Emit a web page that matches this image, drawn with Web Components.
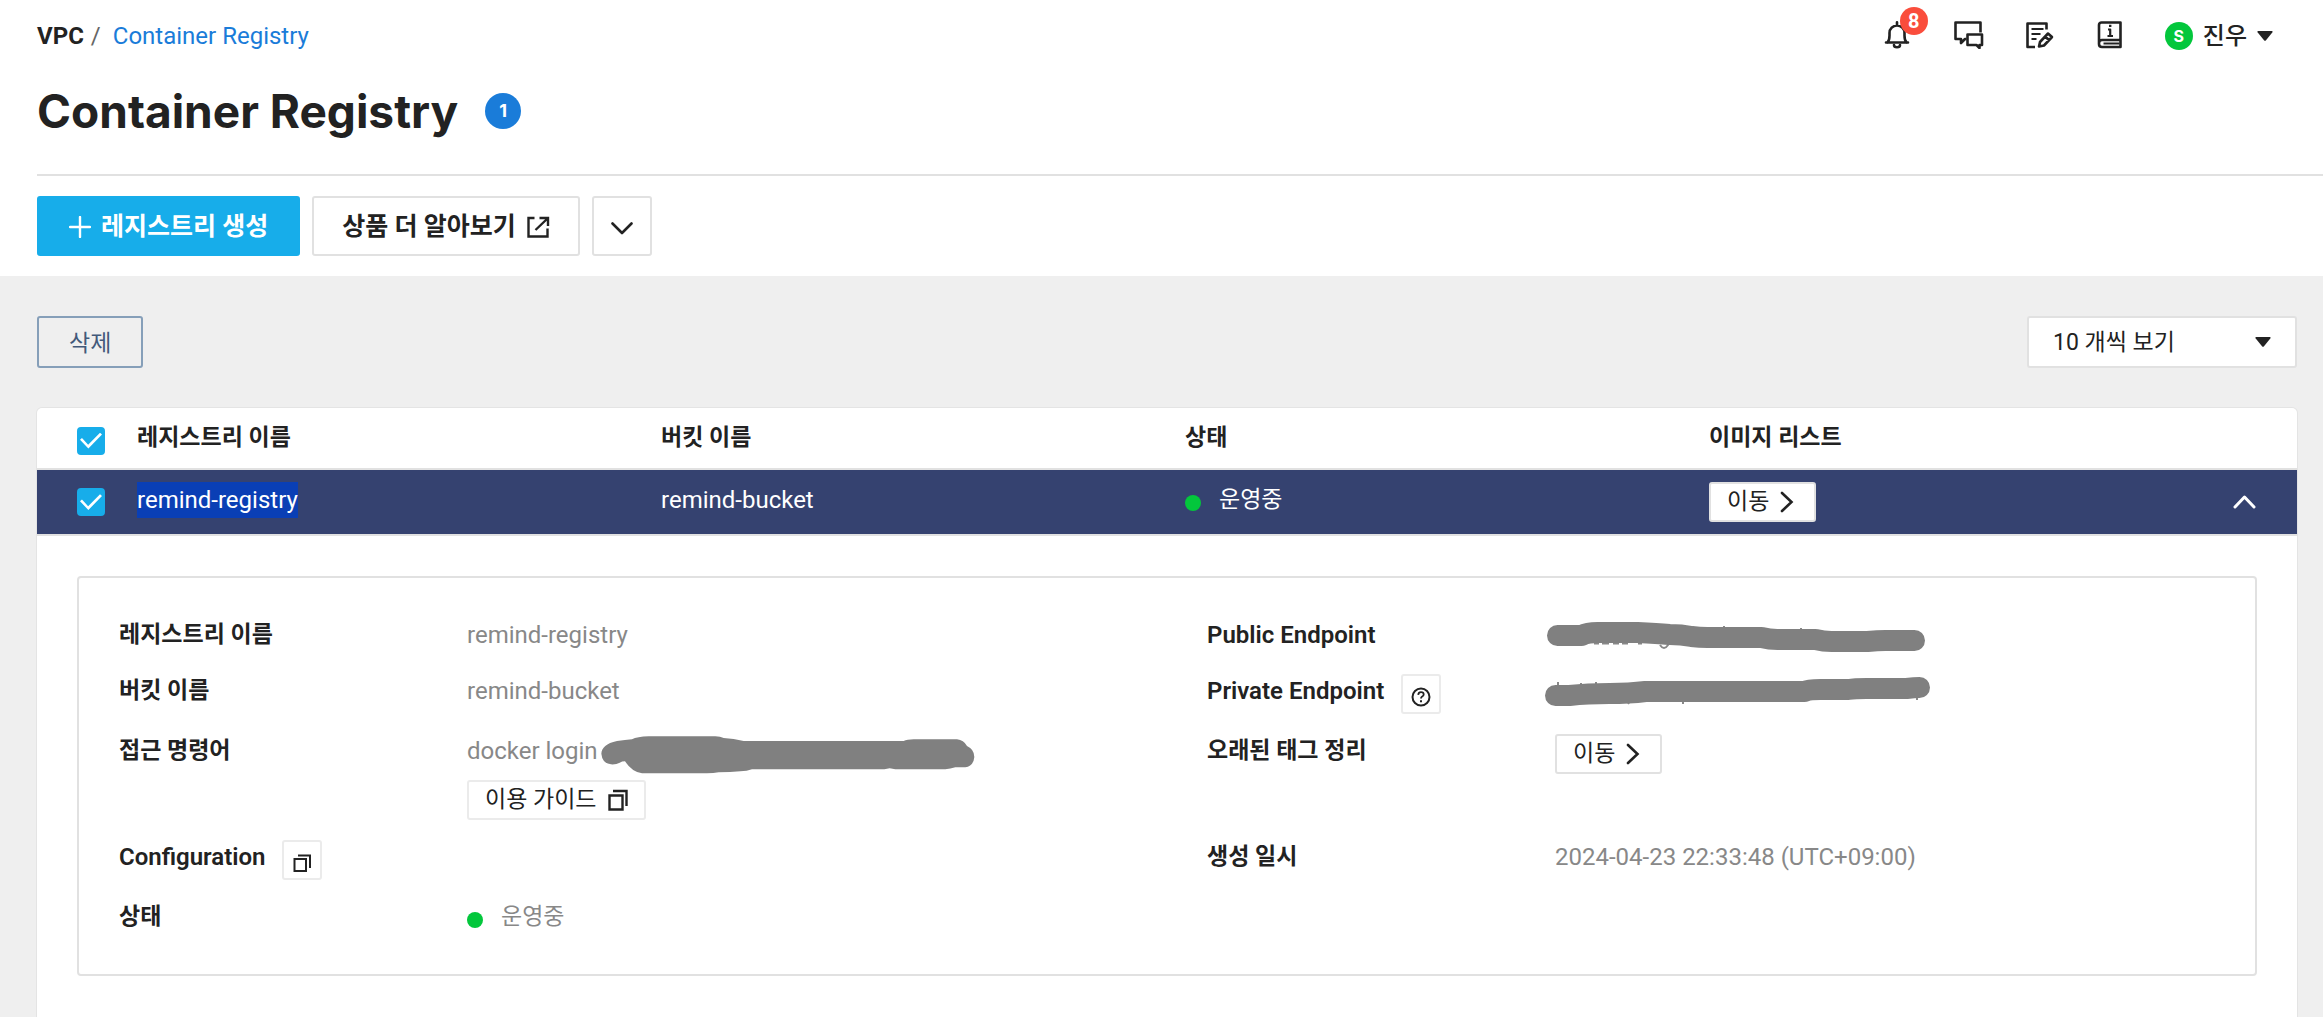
<!DOCTYPE html>
<html lang="ko">
<head>
<meta charset="utf-8">
<title>Container Registry</title>
<style>
  :root {
    --ink: #222;
    --muted: #888;
    --line: #e1e1e1;
    --accent: #17adea;
    --link: #1a7cd9;
    --navy: #354270;
    --green: #03c73c;
  }
  body {
    margin: 0;
    background: #efefef;
    color: var(--ink);
    font: 24px/40px Roboto, "Noto Sans CJK KR", sans-serif;
  }
</style>
</head>
<body>
<cr-app></cr-app>

<script>
const BASE = `
  *, *::before, *::after { box-sizing: border-box; }
  button, select, input { font: inherit; color: inherit; margin: 0; }
  button { background: none; border: 0; padding: 0; cursor: pointer; }
  svg { display: block; flex: none; }
`;

function define(name, css, html) {
  const template = document.createElement('template');
  template.innerHTML = `<style>${BASE}${css}</style>${html}`;
  customElements.define(name, class extends HTMLElement {
    constructor() {
      super();
      this.attachShadow({ mode: 'open', delegatesFocus: true })
        .append(template.content.cloneNode(true));
    }
    connectedCallback() {
      const control = this.shadowRoot.querySelector('[data-control]');
      const label = this.getAttribute('label');
      if (control && label) control.setAttribute('aria-label', label);
    }
  });
}

/* Push button: variants primary, action, arrow, outline and square */
define('cr-button', `
  :host { display: inline-flex; font-size: 23px; }
  button {
    display: flex; align-items: center; justify-content: center; gap: 11px;
    height: 40px; padding: 0 16px; line-height: 36px; white-space: nowrap;
    color: var(--ink); background: #fff; border: 2px solid var(--line); border-radius: 3px;
  }
  :host([variant=primary]) { font-size: 25px; font-weight: 700; }
  :host([variant=primary]) button { height: 60px; gap: 10px; padding: 2px 30px 0; color: #fff; background: var(--accent); border-color: var(--accent); }
  :host([variant=action]) { font-size: 25px; font-weight: 600; }
  :host([variant=action]) button { height: 60px; gap: 10px; padding: 2px 28px 0; }
  :host([variant=arrow]) button { height: 60px; width: 60px; padding: 4px 0 0; }
  :host([variant=outline]) button { height: 52px; padding: 3px 30px 0; color: #42597a; background: none; border-color: #869fb9; }
  :host([variant=square]) button { width: 40px; padding: 6px 0 0; }
  :host([soft]) button { border-color: #ebebeb; }
`, `<button type="button" data-control><slot></slot></button>`);

/* Tick box */
define('cr-check', `
  :host { display: flex; }
  input {
    appearance: none; width: 28px; height: 28px; border-radius: 4px;
    border: 2px solid var(--line); background: #fff; display: grid; place-items: center;
  }
  input:checked { background: var(--accent); border-color: var(--accent); }
  input:checked::after {
    content: ""; width: 22px; height: 16px; background: #fff;
    clip-path: polygon(0 45%, 9% 34%, 37% 76%, 91% 2%, 100% 13%, 38% 100%);
  }
`, `<input type="checkbox" data-control checked>`);

/* Running state with its dot */
define('cr-status', `
  :host { display: flex; align-items: center; gap: 18px; font-size: 23px; }
  i { width: 16px; height: 16px; margin-top: 5px; border-radius: 50%; background: var(--green); }
`, `<i></i><span><slot></slot></span>`);

/* Name and value of one property */
define('cr-field', `
  :host { display: grid; grid-template-columns: 348px 1fr; align-items: start; padding-left: 40px; }
  .name { display: flex; align-items: flex-start; font-weight: 600; font-size: 24px; }
  :host([ko]) .name { font-size: 23px; }
  ::slotted([slot=tip]) { margin: 3px 0 1px 17px; }
  .value { display: flex; flex-direction: column; align-items: flex-start; color: var(--muted); }
  ::slotted(cr-button:not([slot])) { margin: 3px 0 1px; }
  ::slotted(.guide) { margin-top: 9px !important; }
`, `<div class="name"><slot name="name"></slot><slot name="tip"></slot></div>
    <div class="value"><slot></slot></div>`);

define('cr-topbar', `
  :host { display: flex; justify-content: space-between; align-items: center; height: 72px; padding: 0 50px 0 37px; }
  nav { display: flex; }
  nav b { font-weight: 700; }
  nav b a { color: inherit; }
  nav i { font-style: normal; color: #666; margin: 0 12px 0 7px; }
  a { color: var(--link); text-decoration: none; }
  .tools { display: flex; align-items: center; gap: 39px; }
  .tools button { display: block; padding-bottom: 4px; }
  .bell { position: relative; }
  .count {
    position: absolute; left: 19px; top: -12px; width: 28px; height: 28px; border-radius: 50%;
    background: #fa4d3c; color: #fff; font: 700 20px/28px Roboto, sans-serif; text-align: center;
  }
  .tools .user { display: flex; align-items: center; gap: 10px; padding: 0; font-size: 24px; font-weight: 500; line-height: 32px; }
  .face { width: 28px; height: 28px; border-radius: 50%; background: var(--green); color: #fff; font: 700 16px/28px Inter, sans-serif; }
`, `
  <nav aria-label="위치"><b><a href="#vpc">VPC</a></b><i>/</i><a href="#registry">Container Registry</a></nav>
  <div class="tools">
    <button type="button" class="bell" aria-label="알림">
      <svg width="32" height="30" viewBox="0 0 32 30" fill="none" stroke="#222" stroke-width="2.6" stroke-linecap="round" stroke-linejoin="round">
        <path d="M5 23.500h22M6.500 23.500c2-2 2-4 2-7v-2.500a7.500 7.500 0 0 1 15 0v2.500c0 3 0 5 2 7M16 3.200v3"/>
        <path d="M13 26a3 2.200 0 0 0 6 0"/>
      </svg>
      <span class="count">8</span>
    </button>
    <button type="button" aria-label="문의">
      <svg width="32" height="30" viewBox="0 0 32 30" fill="none" stroke="#222" stroke-width="2.600" stroke-linejoin="round">
        <path d="M14.500 20h-1.500l-4 4v-4H3.500v-16.500h25v10"/>
        <path d="M15.500 15.500h14.500v10.500h-2.500v3l-3-3h-9z"/>
      </svg>
    </button>
    <button type="button" aria-label="메모">
      <svg width="32" height="30" viewBox="0 0 32 30" fill="none" stroke="#222" stroke-width="2.600" stroke-linejoin="round">
        <path d="M12 28H4.500V4.500h19v6"/>
        <path d="M8.500 10h12M8.500 15h9M8.500 20h5" stroke-width="2"/>
        <path d="M16 27.500l1-4.500 8-8.500 4 3.500-8 8.500z M22 17.500l4 3.500"/>
      </svg>
    </button>
    <button type="button" aria-label="가이드">
      <svg width="32" height="30" viewBox="0 0 32 30" fill="none" stroke="#222" stroke-width="2.600" stroke-linejoin="round">
        <path d="M26.500 21v-17.500H7.500c-1.500 0-2.500 1-2.500 2.500v19c0 2 1 3 3 3h18.500v-7H8c-2 0-3 1.500-3 3"/>
        <path d="M9.500 24.500h16" stroke-width="2"/>
        <path d="M14 10.500h2.200v6.500M13.500 17h5.500M15 6.800h2.400" stroke-width="2.200"/>
      </svg>
    </button>
    <button type="button" class="user">
      <span class="face">S</span><span>진우</span>
      <svg width="16" height="10" viewBox="0 0 16 10"><path d="M1 0h14q1 .5.300 1.500L9 9.300q-1 1-2 0L.700 1.500Q0 .5 1 0z" fill="#222"/></svg>
    </button>
  </div>`);

define('cr-heading', `
  :host { display: block; padding-left: 37px; }
  .row { display: flex; align-items: center; gap: 27px; height: 104px; padding-bottom: 24px; border-bottom: 2px solid var(--line); }
  h1 { margin: 0; font: 700 46px/60px Inter, sans-serif; }
  span { width: 36px; height: 36px; border-radius: 50%; background: var(--link); color: #fff; font: 700 18px/36px Inter, sans-serif; text-align: center; }
  .bar { display: flex; gap: 12px; padding: 20px 0; }
`, `
  <div class="row"><h1>Container Registry</h1><span>1</span></div>
  <div class="bar"><slot></slot></div>`);

define('cr-pagesize', `
  :host { display: grid; width: 270px; font-size: 23px; }
  select, svg { grid-area: 1 / 1; }
  select { appearance: none; width: 100%; height: 52px; padding: 2px 24px 0; background: #fff; border: 2px solid var(--line); border-radius: 3px; }
  svg { justify-self: end; align-self: center; margin-right: 26px; pointer-events: none; }
`, `
  <select data-control><option>10 개씩 보기</option></select>
  <svg width="16" height="10" viewBox="0 0 16 10"><path d="M1 0h14q1 .5.300 1.500L9 9.300q-1 1-2 0L.700 1.500Q0 .5 1 0z" fill="#222"/></svg>`);

define('cr-table', `
  :host { display: block; }
  table { width: 100%; border-collapse: collapse; table-layout: fixed; }
  th, td { padding: 0; text-align: left; vertical-align: middle; font-weight: 400; }
  tr { border-bottom: 2px solid var(--line); }
  thead th { height: 61px; font-size: 23px; font-weight: 600; }
  tbody td { height: 66px; background: var(--navy); color: #fff; line-height: 36px; }
  tbody td.text { padding-bottom: 4px; }
  thead cr-check { padding-top: 5px; }
  cr-check { padding-left: 40px; }
  col.pick { width: 100px; }
  col.more { width: 64px; }
  mark { display: inline-block; background: #0a3fb5; color: #fff; }
  td cr-button, td button { display: flex; }
`, `
  <table>
    <colgroup><col class="pick"><col><col><col><col><col class="more"></colgroup>
    <thead><tr>
      <th><cr-check label="전체 선택"></cr-check></th>
      <th scope="col">레지스트리 이름</th><th scope="col">버킷 이름</th><th scope="col">상태</th><th scope="col">이미지 리스트</th><th></th>
    </tr></thead>
    <tbody><tr>
      <td><cr-check label="remind-registry 선택"></cr-check></td>
      <td class="text"><mark>remind-registry</mark></td>
      <td class="text">remind-bucket</td>
      <td class="text"><cr-status>운영중</cr-status></td>
      <td><cr-button>이동 <svg width="18" height="22" viewBox="0 0 18 22" fill="none" stroke="#222" stroke-width="2.600" stroke-linecap="round"><path d="M2 2l9.500 9L2 20"/></svg></cr-button></td>
      <td><button type="button" aria-label="접기"><svg width="24" height="14" viewBox="0 0 24 14" fill="none" stroke="#fff" stroke-width="3" stroke-linecap="round" stroke-linejoin="round"><path d="M2 12l9.500-10L21 12"/></svg></button></td>
    </tr></tbody>
  </table>`);

define('cr-details', `
  :host { display: block; padding: 40px; }
  section {
    display: grid; grid-template-columns: 1fr 1fr; row-gap: 16px;
    padding: 37px 0; border: 2px solid var(--line); border-radius: 4px;
  }
  .line { display: flex; align-items: center; gap: 3px; height: 40px; }
  .line .login { margin-top: 8px; }
  .pull { margin-left: -10px; }
`, `
  <section>
    <cr-field ko><span slot="name">레지스트리 이름</span>remind-registry</cr-field>
    <cr-field><span slot="name">Public Endpoint</span>
      <div class="line"><svg class="pull" width="382" height="36" viewBox="1545 617 382 36" fill="none" role="img" aria-label="가려진 주소">
        <path d="M1594 643.500h5M1602 643.500h7M1613 643.500h6M1622 643.500h6M1638 643.500h4M1660 645q4 6 8 0v-3M1708 640v8M1724 626v4M1801 628v4" stroke="#888" stroke-width="2"/>
        <path d="M1557.500 635.500h24q6-3 16-3h40q20 1 32 2 12 0 22 2 8 1 16 1h54q8 2 16 2h38q8 2 16 2h36q10-1 18-1h29" stroke="#808080" stroke-width="21" stroke-linecap="round" stroke-linejoin="round"/>
      </svg></div></cr-field>
    <cr-field ko><span slot="name">버킷 이름</span>remind-bucket</cr-field>
    <cr-field><span slot="name">Private Endpoint</span>
      <cr-button slot="tip" variant="square" soft label="도움말"><svg width="20" height="20" viewBox="0 0 20 20" fill="none" stroke="#222"><circle cx="10" cy="10" r="8.500" stroke-width="2"/><path d="M7.200 7.800q.3-2.600 2.800-2.600 2.700 0 2.700 2.300 0 1.200-1.500 2-1.200.7-1.200 2" stroke-width="1.800"/><path d="M10 13.300v1.900" stroke-width="2"/></svg></cr-button>
      <div class="line"><svg class="pull" width="390" height="36" viewBox="1545 673 390 36" fill="none" role="img" aria-label="가려진 주소">
        <path d="M1558 682v6M1581 683v4M1596 682v4M1601 704v-4M1629 704l-2-3M1683 704v-6M1856 698h7M1870 698h6M1883 698h8M1901 698h6M1917 697v3" stroke="#888" stroke-width="2"/>
        <path d="M1555.500 695.500h14q18-2 40-2 20 0 36-2h159q4-2 16-2h28q6-1 18-1h40q8-1 13-1" stroke="#808080" stroke-width="21" stroke-linecap="round" stroke-linejoin="round"/>
      </svg></div></cr-field>
    <cr-field ko><span slot="name">접근 명령어</span>
      <div class="line">docker login<svg class="login" width="374" height="38" viewBox="62 110 1122 114" role="img" aria-label="가려진 주소"><path fill="#808080" d="M63 163C64 145 78 132 110 125Q135 122 155 120Q170 112 205 111H405Q420 112 430 116Q460 118 490 125H970Q980 120 1000 120H1130Q1150 122 1160 140Q1182 150 1182 173Q1180 200 1155 204H1125Q1110 209 1095 210H945L928 207L912 210H515Q500 216 480 216Q450 219 415 219Q400 222 380 222H185Q155 218 134 186Q125 186 118 190Q108 196 92 195Q66 192 63 163Z"/></svg></div>
      <cr-button class="guide" soft>이용 가이드 <svg width="20" height="22" viewBox="0 0 20 22" fill="none" stroke="#222" stroke-width="2.400"><path d="M1.500 6.500h13v14h-13z"/><path d="M5 2h13.500v15"/></svg></cr-button></cr-field>
    <cr-field ko><span slot="name">오래된 태그 정리</span>
      <cr-button>이동 <svg width="18" height="22" viewBox="0 0 18 22" fill="none" stroke="#222" stroke-width="2.600" stroke-linecap="round"><path d="M2 2l9.500 9L2 20"/></svg></cr-button></cr-field>
    <cr-field><span slot="name">Configuration</span>
      <cr-button slot="tip" variant="square" soft label="복사"><svg width="18" height="18" viewBox="0 0 18 18" fill="none" stroke="#222" stroke-width="2"><path d="M1.500 5h11.500v12h-11.500z"/><path d="M5 1.500h12v12.500"/></svg></cr-button></cr-field>
    <cr-field ko><span slot="name">생성 일시</span>2024-04-23 22:33:48 (UTC+09:00)</cr-field>
    <cr-field ko><span slot="name">상태</span><cr-status>운영중</cr-status></cr-field>
  </section>`);

define('cr-app', `
  :host { display: flex; flex-direction: column; min-height: 100vh; }
  header { background: #fff; }
  main { flex: 1; display: flex; flex-direction: column; padding: 40px 26px 0 37px; }
  .list-bar { display: flex; justify-content: space-between; margin-bottom: 40px; }
  .card { flex: 1; background: #fff; border-radius: 5px 5px 0 0; box-shadow: 0 0 0 1px #e4e4e4; }
`, `
  <header>
    <cr-topbar></cr-topbar>
    <cr-heading>
      <cr-button variant="primary"><svg width="22" height="22" viewBox="0 0 22 22" stroke="#fff" stroke-width="2.400" stroke-linecap="round"><path d="M11 1v20M1 11h20"/></svg>레지스트리 생성</cr-button>
      <cr-button variant="action">상품 더 알아보기<svg width="24" height="22" viewBox="0 0 24 22" fill="none" stroke="#222" stroke-width="2.400"><path d="M8.500 2H2.500v18.500h19v-8M13.500 2h8.500v8M21.500 2.500L9.500 14"/></svg></cr-button>
      <cr-button variant="arrow" label="더 보기"><svg width="22" height="14" viewBox="0 0 22 14" fill="none" stroke="#222" stroke-width="2.600" stroke-linecap="round" stroke-linejoin="round"><path d="M1.500 2.500L11 12l9.500-9.500"/></svg></cr-button>
    </cr-heading>
  </header>
  <main>
    <div class="list-bar">
      <cr-button variant="outline">삭제</cr-button>
      <cr-pagesize label="페이지당 개수"></cr-pagesize>
    </div>
    <div class="card">
      <cr-table></cr-table>
      <cr-details></cr-details>
    </div>
  </main>`);
</script>
</body>
</html>
